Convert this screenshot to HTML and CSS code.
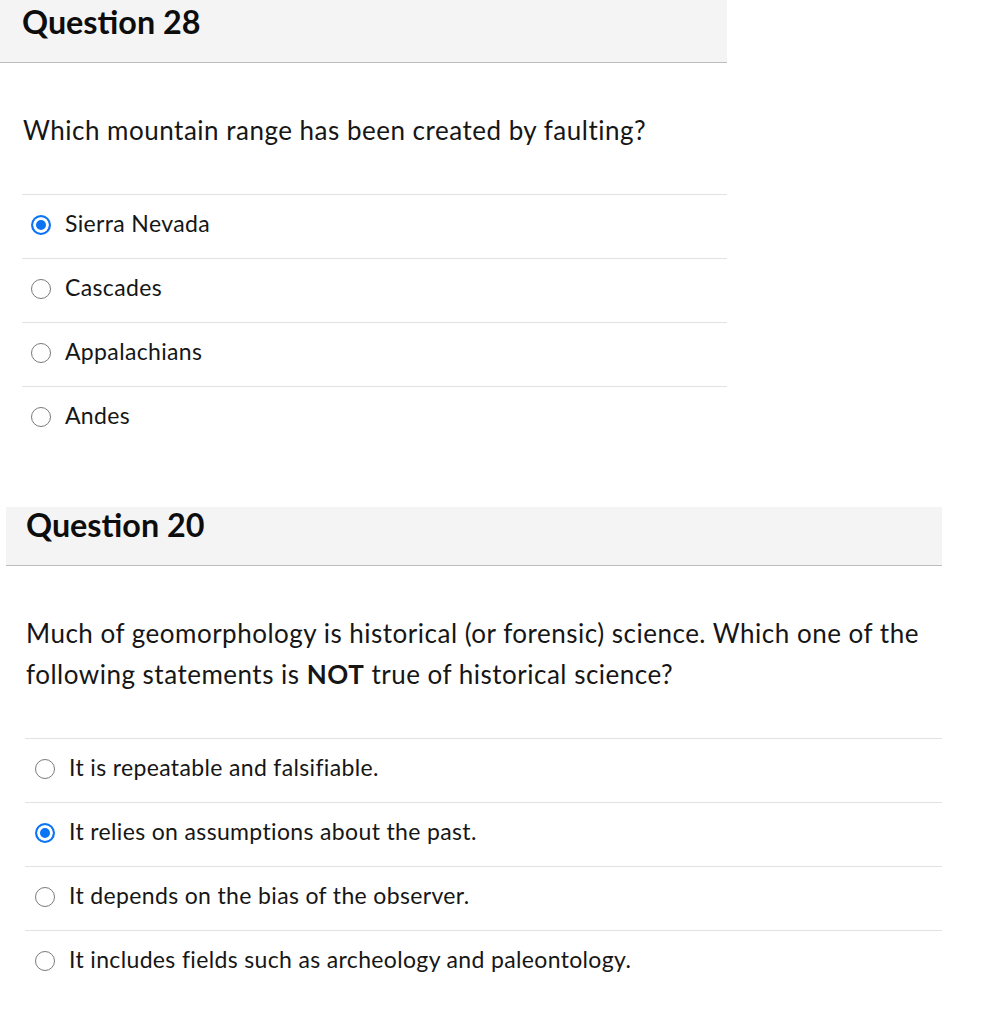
FILE: index.html
```html
<!DOCTYPE html>
<html lang="en">
<head>
<meta charset="utf-8">
<title>Quiz</title>
<link rel="stylesheet" href="styles.css">
</head>
<body>
<section class="question q-first">
  <header class="q-header">
    <h2 class="q-title">Question 28</h2>
  </header>
  <div class="q-text">
    <p>Which mountain range has been created by faulting?</p>
  </div>
  <ul class="answers">
    <li class="answer"><span class="radio checked"></span><span class="label">Sierra Nevada</span></li>
    <li class="answer"><span class="radio"></span><span class="label">Cascades</span></li>
    <li class="answer"><span class="radio"></span><span class="label">Appalachians</span></li>
    <li class="answer"><span class="radio"></span><span class="label">Andes</span></li>
  </ul>
</section>

<section class="question q-second">
  <header class="q-header">
    <h2 class="q-title">Question 20</h2>
  </header>
  <div class="q-text">
    <p>Much of geomorphology is historical (or forensic) science. Which one of the following statements is <strong>NOT</strong> true of historical science?</p>
  </div>
  <ul class="answers">
    <li class="answer"><span class="radio"></span><span class="label">It is repeatable and falsifiable.</span></li>
    <li class="answer"><span class="radio checked"></span><span class="label">It relies on assumptions about the past.</span></li>
    <li class="answer"><span class="radio"></span><span class="label">It depends on the bias of the observer.</span></li>
    <li class="answer"><span class="radio"></span><span class="label">It includes fields such as archeology and paleontology.</span></li>
  </ul>
</section>
</body>
</html>
```
FILE: styles.css
```css
* { box-sizing: border-box; }

html, body {
  margin: 0;
  padding: 0;
  background: #ffffff;
}

body {
  font-family: Lato, "Open Sans", "Liberation Sans", sans-serif;
  color: #161616;
}

.question {
  display: flex;
  flex-direction: column;
}

.q-first {
  width: 727px;
  margin-bottom: 57px;
}

.q-second {
  width: 936px;
  margin-left: 6px;
}

.q-header {
  background: #f4f4f4;
  border-bottom: 1px solid #bdbdbd;
  height: 59px;
}

.q-first .q-header {
  height: 63px;
  padding: 4px 0 0 22px;
}

.q-second .q-header {
  padding: 0 0 0 20px;
}

.q-title {
  margin: 0;
  font-size: 32.3px;
  line-height: 36px;
  font-weight: 700;
  color: #0d0d0d;
}

.q-text {
  padding: 47px 0 43px;
}

.q-first .q-text { padding-left: 23px; }
.q-second .q-text { padding-left: 20px; padding-right: 10px; }

.q-text p {
  margin: 0;
  font-size: 26px;
  letter-spacing: 0.5px;
  line-height: 41px;
}

.q-text strong { font-weight: 700; }

.answers {
  list-style: none;
  margin: 0;
  padding: 0;
}

.q-first .answers { margin-left: 22px; }
.q-second .answers { margin-left: 19px; }

.answer {
  display: flex;
  align-items: center;
  gap: 14px;
  height: 64px;
  padding-bottom: 8px;
  border-top: 1px solid #e2e2e2;
}

.q-first .answer { padding-left: 9px; }
.q-second .answer { padding-left: 10px; }

.label {
  font-size: 23px;
  letter-spacing: 0.35px;
  line-height: 30px;
}

.radio {
  flex: none;
  width: 20px;
  height: 20px;
  margin-top: 4px;
  border-radius: 50%;
  border: 1.5px solid #7a7a7a;
  background: #fff;
}

.radio.checked {
  border: 2px solid #0b74f5;
  background: #0b74f5;
  box-shadow: inset 0 0 0 3px #ffffff;
}
```
